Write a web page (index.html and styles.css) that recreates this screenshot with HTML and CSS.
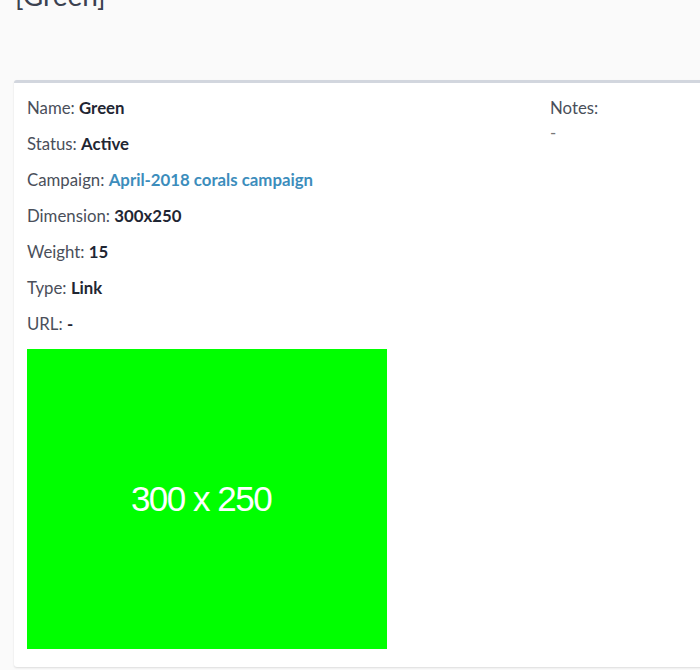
FILE: index.html
```html
<!DOCTYPE html>
<html>
<head>
<meta charset="utf-8">
<link rel="stylesheet" href="styles.css">
</head>
<body>
<div class="page">
  <h1 class="title">[Green]</h1>
  <div class="box">
    <div class="cols">
      <div class="col-left">
        <p class="row"><span class="label">Name:</span> <b class="val">Green</b></p>
        <p class="row"><span class="label">Status:</span> <b class="val">Active</b></p>
        <p class="row"><span class="label">Campaign:</span> <a class="link" href="#">April-2018 corals campaign</a></p>
        <p class="row"><span class="label">Dimension:</span> <b class="val">300x250</b></p>
        <p class="row"><span class="label">Weight:</span> <b class="val">15</b></p>
        <p class="row"><span class="label">Type:</span> <b class="val">Link</b></p>
        <p class="row"><span class="label">URL:</span> <b class="val">-</b></p>
        <div class="banner"><span class="banner-text">300 x 250</span></div>
      </div>
      <div class="col-right">
        <p class="notes-label">Notes:</p>
        <p class="notes-val">-</p>
      </div>
    </div>
  </div>
</div>
</body>
</html>
```

FILE: styles.css
```css
html, body {
  margin: 0;
  padding: 0;
  background: #fafafa;
  overflow: hidden;
  width: 700px;
  height: 670px;
}
.page {
  font-family: "Lato", "Noto Sans", sans-serif;
  color: #4a4f5a;
  padding: 0 0 0 14px;
}
.title {
  margin: -22px 0 0 1px;
  font-size: 28px;
  font-weight: 400;
  line-height: 34px;
  color: #3b4150;
  height: 102px;
}
.box {
  width: 1100px;
  background: #fff;
  border-top: 3px solid #d2d6de;
  border-radius: 3px;
  box-shadow: 0 1px 2px rgba(0,0,0,0.12);
  padding: 7px 13px 18px;
  box-sizing: border-box;
}
.cols {
  display: flex;
}
.col-left {
  width: 523px;
}
.col-right {
  flex: 1;
}
.row {
  margin: 0;
  font-size: 16.8px;
  line-height: 36px;
  height: 36px;
}
.label {
  color: #4a4f5a;
}
.val {
  color: #1f2633;
  font-weight: 700;
}
.link {
  color: #3c8dbc;
  font-weight: 700;
  text-decoration: none;
}
.banner {
  margin-top: 7px;
  width: 360px;
  height: 300px;
  background: #00ff00;
  display: flex;
  align-items: center;
  justify-content: center;
  box-sizing: border-box;
  padding-right: 12px;
}
.banner-text {
  font-family: "Liberation Sans", Arial, sans-serif;
  font-size: 35px;
  color: #fff;
  letter-spacing: -1.5px;
}
.notes-label {
  margin: 0;
  font-size: 16.8px;
  line-height: 36px;
  color: #4a4f5a;
}
.notes-val {
  margin: -5px 0 0;
  font-size: 16.8px;
  line-height: 24px;
  color: #777;
}
```
